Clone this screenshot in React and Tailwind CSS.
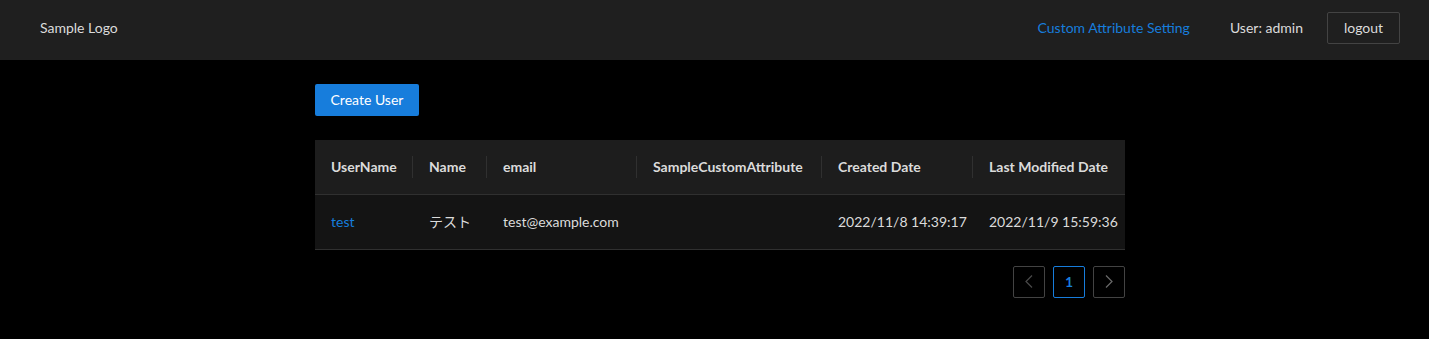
const columns = [
  { title: 'UserName', w: 'w-[98px]' },
  { title: 'Name', w: 'w-[74px]' },
  { title: 'email', w: 'w-[150px]' },
  { title: 'SampleCustomAttribute', w: 'w-[185px]' },
  { title: 'Created Date', w: 'w-[151px]' },
  { title: 'Last Modified Date', w: 'w-[152px]' },
]

const rows = [
  {
    username: 'test',
    name: 'テスト',
    email: 'test@example.com',
    custom: '',
    created: '2022/11/8 14:39:17',
    modified: '2022/11/9 15:59:36',
  },
]

const Chevron = ({ dir }) => (
  <svg width="8" height="13" viewBox="0 0 8 13" fill="none" stroke="currentColor" strokeWidth="1.2">
    {dir === 'left' ? <polyline points="7,0.5 1,6.5 7,12.5" /> : <polyline points="1,0.5 7,6.5 1,12.5" />}
  </svg>
)

export default function App() {
  return (
    <div className="min-h-[339px] bg-black text-[14px] leading-[22px] text-[#dbdbdb] font-['Lato','Noto_Sans_CJK_JP',sans-serif]">
      <header className="h-[60px] bg-[#1f1f1f] flex items-center pl-[40px] pr-[29px] pb-[4px]">
        <div className="text-[#dbdbdb]">Sample Logo</div>
        <div className="ml-auto flex items-center">
          <a className="text-[#177ddc] cursor-pointer">Custom Attribute Setting</a>
          <span className="ml-[40px]">User: admin</span>
          <button className="ml-[24px] h-[32px] w-[73px] border border-[#434343] rounded-[2px] bg-transparent">
            logout
          </button>
        </div>
      </header>

      <main className="ml-[315px] w-[810px] pt-[24px]">
        <button className="h-[32px] w-[104px] bg-[#177ddc] text-white rounded-[2px]">Create User</button>

        <table className="mt-[24px] w-full border-collapse table-fixed">
          <thead>
            <tr className="bg-[#1d1d1d]">
              {columns.map((c, i) => (
                <th key={c.title} className={`${c.w} relative h-[54px] px-[16px] text-left font-bold border-b border-[#303030] whitespace-nowrap`}>
                  {c.title}
                  {i < columns.length - 1 && (
                    <span className="absolute right-0 top-1/2 -translate-y-1/2 h-[22px] w-px bg-[#303030]" />
                  )}
                </th>
              ))}
            </tr>
          </thead>
          <tbody>
            {rows.map(r => (
              <tr key={r.username} className="bg-[#141414]">
                <td className="h-[55px] px-[16px] border-b border-[#303030] text-[#177ddc]">{r.username}</td>
                <td className="px-[16px] border-b border-[#303030]">{r.name}</td>
                <td className="px-[16px] border-b border-[#303030] whitespace-nowrap">{r.email}</td>
                <td className="px-[16px] border-b border-[#303030]">{r.custom}</td>
                <td className="px-[16px] border-b border-[#303030] whitespace-nowrap">{r.created}</td>
                <td className="px-[16px] border-b border-[#303030] whitespace-nowrap">{r.modified}</td>
              </tr>
            ))}
          </tbody>
        </table>

        <div className="mt-[16px] flex justify-end gap-[8px]">
          <button className="w-[32px] h-[32px] flex items-center justify-center border border-[#434343] rounded-[2px] text-[#4a4a4a]">
            <Chevron dir="left" />
          </button>
          <button className="w-[32px] h-[32px] flex items-center justify-center border border-[#177ddc] rounded-[2px] text-[#177ddc] font-bold">
            1
          </button>
          <button className="w-[32px] h-[32px] flex items-center justify-center border border-[#434343] rounded-[2px] text-[#6a6a6a]">
            <Chevron dir="right" />
          </button>
        </div>
      </main>
    </div>
  )
}
